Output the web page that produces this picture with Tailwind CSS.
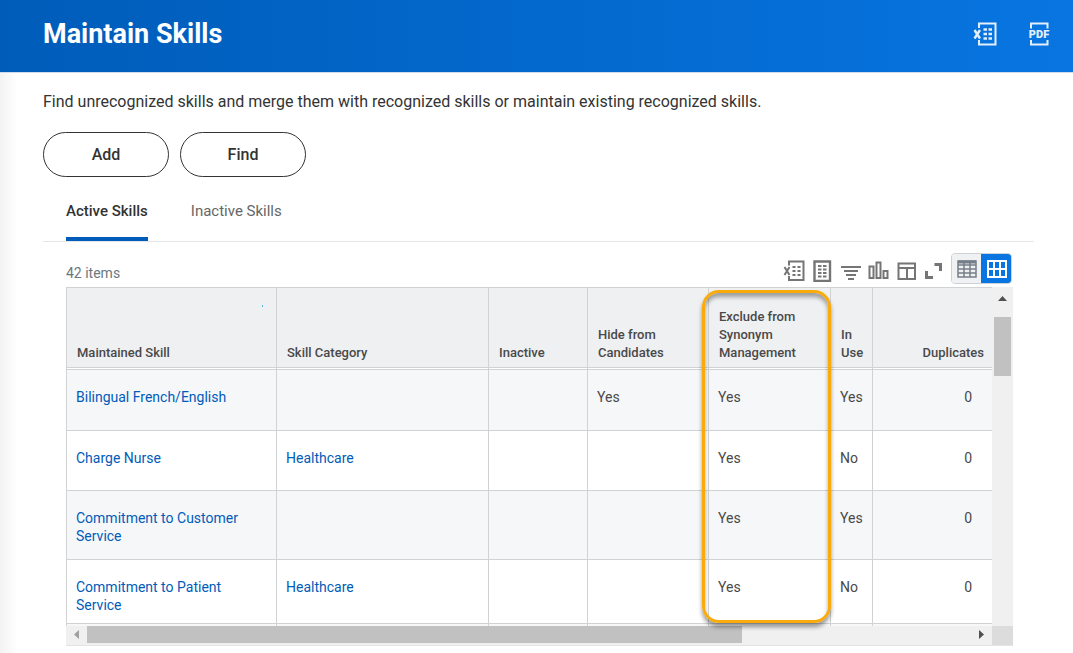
<!DOCTYPE html>
<html lang="en">
<head>
  <meta charset="UTF-8">
  <meta name="viewport" content="width=device-width, initial-scale=1.0">
  <title>Maintain Skills</title>
  <script src="https://cdn.jsdelivr.net/npm/@tailwindcss/browser@4"></script>
</head>
<body class="min-h-screen bg-white font-[Roboto,sans-serif] text-[#333333]">

  <!-- Page header -->
  <header class="flex h-[73px] items-center justify-between border-b border-[#cfdcec] bg-linear-to-r from-[#005cb9] to-[#0875e1] pb-[5px] pl-[43px] pr-[22px] text-white">
    <h1 class="text-[27px] leading-8 font-bold">Maintain Skills</h1>
    <div class="flex items-center gap-[30px]">
      <button type="button" aria-label="Export to Excel">
        <svg class="h-6 w-6" viewBox="0 0 24 24" fill="none">
          <path d="M6 6V1.500H22.500V22.500H6V18" stroke="#e3effb" stroke-width="2"/>
          <path d="M1.500 8L7 16.500M7 8L1.500 16.500" stroke="#e3effb" stroke-width="2.400"/>
          <path d="M10.500 7.500h3.500M15.500 7.500h3.500M10.500 12h3.500M15.500 12h3.500M10.500 16.500h3.500M15.500 16.500h3.500" stroke="#e3effb" stroke-width="2.400"/>
        </svg>
      </button>
      <button type="button" aria-label="Export to PDF">
        <svg class="h-6 w-6" viewBox="0 0 24 24" fill="none">
          <path d="M4 6.500V1.500H20.500V6.500M4 18V22.500H20.500V18" stroke="#e3effb" stroke-width="2"/>
          <text x="12" y="16" text-anchor="middle" font-size="11" font-weight="900" fill="#e3effb">PDF</text>
        </svg>
      </button>
    </div>
  </header>

  <main class="bg-linear-to-r from-[#f3f3f3] to-white to-[18px] pb-2 pl-[43px] pr-[39px] pt-[17px]">
    <p class="text-base leading-6">Find unrecognized skills and merge them with recognized skills or maintain existing recognized skills.</p>

    <div class="mt-[18px] flex gap-[11px]">
      <button type="button" class="h-[45px] w-[126px] rounded-full border border-[#333333] bg-white text-base font-medium">Add</button>
      <button type="button" class="h-[45px] w-[126px] rounded-full border border-[#333333] bg-white text-base font-medium">Find</button>
    </div>

    <!-- Tabs -->
    <nav class="mt-4 flex gap-[43px] border-b border-[#e4e6e8] pl-[23px] text-[15px] leading-6">
      <a href="#" class="h-12 border-b-4 border-[#005cb9] pt-[6px] font-medium">Active Skills</a>
      <a href="#" class="h-12 pt-[6px] text-[#666666]">Inactive Skills</a>
    </nav>

    <section class="pl-[23px] pr-[21px]">
      <div class="flex items-end justify-between pb-[3px] pr-px pt-[11px]">
        <p class="text-sm leading-[22px] text-[#6b7780]">42 items</p>

        <!-- Table tools -->
        <div class="flex items-center gap-[5px]">
          <div class="flex items-center gap-[7px] text-[#757575]">
            <button type="button" aria-label="Export table to Excel">
              <svg class="mt-1 h-[22px] w-[22px]" viewBox="0 0 22 22" fill="none" stroke="currentColor">
                <path d="M6 5.500V1.500H20.500V20H6V16" stroke-width="2"/>
                <path d="M1.500 7L6.500 15M6.500 7L1.500 15" stroke-width="2"/>
                <path d="M9.500 7h3M14.500 7h3M9.500 11h3M14.500 11h3M9.500 15h3M14.500 15h3" stroke-width="2"/>
              </svg>
            </button>
            <button type="button" aria-label="View printable version">
              <svg class="mt-1 h-[22px] w-[22px]" viewBox="0 0 22 22" fill="none" stroke="currentColor">
                <path d="M2.500 1.500H18V21H2.500Z" stroke-width="2.400"/>
                <path d="M6 6h3.500M11 6h3.500M6 9.500h3.500M11 9.500h3.500M6 13h3.500M11 13h3.500M6 16.500h3.500M11 16.500h3.500" stroke-width="2"/>
              </svg>
            </button>
            <button type="button" aria-label="Filter">
              <svg class="mt-1 h-[22px] w-[20px]" viewBox="0 0 20 22" fill="none" stroke="currentColor" stroke-width="2">
                <path d="M0 7h20M3 11h14M5 15h10M7 19h6"/>
              </svg>
            </button>
            <button type="button" aria-label="Chart">
              <svg class="mt-1 h-[22px] w-[22px]" viewBox="0 0 22 22" fill="none" stroke="currentColor" stroke-width="2">
                <path d="M1.500 6.500h4V18h-4zM8.500 2.500h4V18h-4zM15.500 11h4v7h-4z"/>
              </svg>
            </button>
            <button type="button" aria-label="Table settings">
              <svg class="mt-1 h-[22px] w-[20px]" viewBox="0 0 20 22" fill="none" stroke="currentColor" stroke-width="2">
                <path d="M1.500 3.500H18V19H1.500ZM1 8H18M10 8V19"/>
              </svg>
            </button>
            <button type="button" aria-label="Full screen">
              <svg class="mt-1 h-[22px] w-[22px]" viewBox="0 0 22 22" fill="none" stroke="currentColor" stroke-width="3">
                <path d="M10.500 4.500H16.500V11M2.500 11V17.500H9"/>
              </svg>
            </button>
          </div>
          <div class="flex h-[31px] w-[61px] overflow-hidden rounded border border-[#ccd2d8]">
            <button type="button" aria-label="Compact grid" class="flex flex-1 items-center justify-center bg-[#f0f1f3]">
              <svg class="h-[18px] w-[20px]" viewBox="0 0 20 18" fill="none" stroke="#757f89" stroke-width="1.500">
                <path d="M1 1H19V17H1ZM1 5H19M1 9H19M1 13H19M7 1V17M13 1V17"/>
                <path d="M1 2H19" stroke-width="3"/>
              </svg>
            </button>
            <button type="button" aria-label="Expanded grid" class="-my-px -mr-px flex w-[31px] items-center justify-center bg-[#0875e1]">
              <svg class="h-[18px] w-[20px]" viewBox="0 0 20 18" fill="none" stroke="#ffffff" stroke-width="2">
                <path d="M1 1H19V17H1ZM1 9H19M7 1V17M13 1V17"/>
              </svg>
            </button>
          </div>
        </div>
      </div>

      <!-- Skills grid -->
      <div class="relative grid grid-cols-[1fr_21px]">
        <table class="w-full table-fixed border-separate border-spacing-0 border-l border-t border-[#d0d2d4] text-left text-sm leading-[18px] text-[#494949] [&_td]:border-b [&_td]:border-r [&_td]:border-[#d0d2d4] [&_td]:px-[9px] [&_td]:align-top [&_td:last-child]:border-r-0 [&_td:last-child]:pr-5 [&_td:last-child]:text-right [&_th]:border-b [&_th]:border-r [&_th]:border-[#d0d2d4] [&_th]:px-[10px] [&_th]:pb-[5px] [&_th]:align-bottom [&_th]:text-[13px] [&_th]:font-medium [&_th:last-child]:border-r-0 [&_th:last-child]:pr-2 [&_th:last-child]:text-right [&_a]:text-[#005cb9]">
          <colgroup>
            <col class="w-[210px]">
            <col class="w-[212px]">
            <col class="w-[99px]">
            <col class="w-[121px]">
            <col class="w-[122px]">
            <col class="w-[42px]">
            <col>
          </colgroup>
          <thead class="bg-[#eff0f2]">
            <tr class="h-20">
              <th class="relative">Maintained Skill<span class="absolute right-[13px] top-[17px] h-[2px] w-px bg-[#4cb8e0]"></span></th>
              <th>Skill Category</th>
              <th>Inactive</th>
              <th>Hide from Candidates</th>
              <th>Exclude from Synonym Management</th>
              <th>In Use</th>
              <th>Duplicates</th>
            </tr>
            <tr class="h-[2px] bg-white" aria-hidden="true">
              <td></td><td></td><td></td><td></td><td></td><td></td><td></td>
            </tr>
          </thead>
          <tbody class="[&_td]:pt-[18px]">
            <tr class="h-[61px] bg-[#f6f7f9]">
              <td><a href="#">Bilingual French/English</a></td>
              <td></td>
              <td></td>
              <td>Yes</td>
              <td>Yes</td>
              <td>Yes</td>
              <td>0</td>
            </tr>
            <tr class="h-[60px]">
              <td><a href="#">Charge Nurse</a></td>
              <td><a href="#">Healthcare</a></td>
              <td></td>
              <td></td>
              <td>Yes</td>
              <td>No</td>
              <td>0</td>
            </tr>
            <tr class="h-[69px] bg-[#f6f7f9]">
              <td><a href="#">Commitment to Customer Service</a></td>
              <td></td>
              <td></td>
              <td></td>
              <td>Yes</td>
              <td>Yes</td>
              <td>0</td>
            </tr>
            <tr class="h-[64px]">
              <td><a href="#">Commitment to Patient Service</a></td>
              <td><a href="#">Healthcare</a></td>
              <td></td>
              <td></td>
              <td>Yes</td>
              <td>No</td>
              <td>0</td>
            </tr>
          </tbody>
          <tfoot class="[&_td]:border-b-0" aria-hidden="true">
            <tr class="h-[2px] bg-[#f6f7f9]">
              <td></td><td></td><td></td><td></td><td></td><td></td><td></td>
            </tr>
          </tfoot>
        </table>

        <!-- Vertical scrollbar -->
        <div class="flex flex-col items-center bg-[#f0f0f0] pt-[9px]">
          <svg class="h-[5px] w-[9px]" viewBox="0 0 9 5" fill="#505050"><path d="M0 5L4.500 0L9 5Z"/></svg>
          <div class="mt-4 h-[59px] w-[17px] bg-[#c1c1c1]"></div>
        </div>

        <!-- Horizontal scrollbar -->
        <div class="flex h-5 items-start border-b border-[#e4e4e4] bg-[#f0f0f0]">
          <svg class="ml-2 mr-2 mt-1 h-[9px] w-[5px]" viewBox="0 0 5 9" fill="#a0a0a0"><path d="M5 0L0 4.500L5 9Z"/></svg>
          <div class="h-[17px] w-[655px] bg-[#c1c1c1]"></div>
          <svg class="ml-auto mr-2 mt-1 h-[9px] w-[5px]" viewBox="0 0 5 9" fill="#505050"><path d="M0 0L5 4.500L0 9Z"/></svg>
        </div>
        <div class="border-b border-[#e4e4e4] bg-[#dcdcdc]"></div>

        <!-- Column highlight -->
        <div class="pointer-events-none absolute bottom-[23px] left-[636px] top-[3px] w-[129px] rounded-[17px] border-3 border-[#f9ab0b] shadow-[0_4px_4px_rgba(0,0,0,0.4),inset_0_4px_4px_rgba(0,0,0,0.35)]"></div>
      </div>
    </section>
  </main>

</body>
</html>
